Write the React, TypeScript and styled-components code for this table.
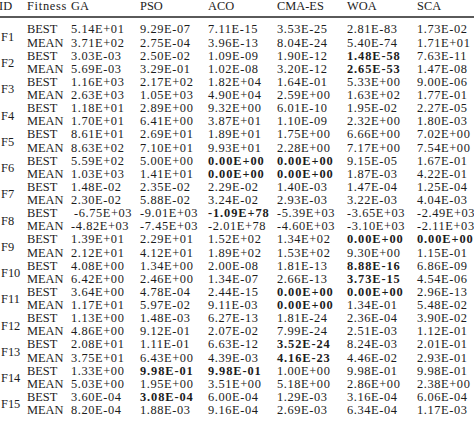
import { createGlobalStyle } from "styled-components";
import styled from "styled-components";

const GlobalStyle = createGlobalStyle`
  html, body {
    margin: 0;
    padding: 0;
    background: #fff;
  }
  body {
    font-family: "Liberation Serif", "Times New Roman", serif;
    color: #1c1c1c;
    overflow: hidden;
  }
`;

const COLS = "27px 44px 69px 68px 69px 70px 70px 1fr";
const ROW_H = 13.14;

const Page = styled.div`
  width: 474px;
  height: 422px;
  overflow: hidden;
  font-size: 12.4px;
`;

const HeaderRow = styled.div`
  display: grid;
  grid-template-columns: ${COLS};
  line-height: 11px;
  padding-top: 0.5px;
  padding-bottom: 4.5px;
  border-bottom: 2px solid #5a5a5a;
`;

const HeadCell = styled.div<{ $shift?: number; $spread?: boolean }>`
  white-space: nowrap;
  margin-left: ${(p) => p.$shift ?? 0}px;
  letter-spacing: ${(p) => (p.$spread ? "0.7px" : "0")};
`;

const Body = styled.div`
  padding-top: 5.4px;
`;

const Group = styled.div`
  display: grid;
  grid-template-columns: ${COLS};
  grid-template-rows: repeat(2, ${ROW_H}px);
  line-height: ${ROW_H}px;
`;

const FuncId = styled.div`
  grid-row: span 2;
  align-self: center;
  padding-left: 1px;
  padding-top: 2px;
  white-space: nowrap;
`;

const Label = styled.div`
  white-space: nowrap;
`;

const Value = styled.div<{ $bold?: boolean; $indent?: boolean }>`
  white-space: nowrap;
  font-weight: ${(p) => (p.$bold ? 700 : 400)};
  letter-spacing: ${(p) => (p.$bold ? "0.9px" : "0.6px")};
  padding-left: ${(p) => (p.$indent ? "3px" : "0")};
`;

const methods = ["GA", "PSO", "ACO", "CMA-ES", "WOA", "SCA"];

// each entry: [best, mean] per method; "*" marks bold, ">" a small indent
const data: string[][][] = [
  [["5.14E+01", "3.71E+02"], ["9.29E-07", "2.75E-04"], ["7.11E-15", "3.96E-13"], ["3.53E-25", "8.04E-24"], ["2.81E-83", "5.40E-74"], ["1.73E-02", "1.71E+01"]],
  [["3.03E-03", "5.69E-03"], ["2.50E-02", "3.29E-01"], ["1.09E-09", "1.02E-08"], ["1.90E-12", "3.20E-12"], ["*1.48E-58", "*2.65E-53"], ["7.63E-11", "1.47E-08"]],
  [["1.16E+03", "2.63E+03"], ["2.17E+02", "1.05E+03"], ["1.82E+04", "4.90E+04"], ["1.64E-01", "2.59E+00"], ["5.33E+00", "1.63E+02"], ["9.00E-06", "1.77E-01"]],
  [["1.18E+01", "1.70E+01"], ["2.89E+00", "6.41E+00"], ["9.32E+00", "3.87E+01"], ["6.01E-10", "1.10E-09"], ["1.95E-02", "2.32E+00"], ["2.27E-05", "1.80E-03"]],
  [["8.61E+01", "8.63E+02"], ["2.69E+01", "7.10E+01"], ["1.89E+01", "9.93E+01"], ["1.75E+00", "2.28E+00"], ["6.66E+00", "7.17E+00"], ["7.02E+00", "7.54E+00"]],
  [["5.59E+02", "1.03E+03"], ["5.00E+00", "1.41E+01"], ["*0.00E+00", "*0.00E+00"], ["*0.00E+00", "*0.00E+00"], ["9.15E-05", "1.87E-03"], ["1.67E-01", "4.22E-01"]],
  [["1.48E-02", "2.30E-02"], ["2.35E-02", "5.88E-02"], ["2.29E-02", "3.24E-02"], ["1.40E-03", "2.93E-03"], ["1.47E-04", "3.22E-03"], ["1.25E-04", "4.04E-03"]],
  [[">-6.75E+03", "-4.82E+03"], ["-9.01E+03", "-7.45E+03"], ["*-1.09E+78", "-2.01E+78"], ["-5.39E+03", "-4.60E+03"], ["-3.65E+03", "-3.10E+03"], ["-2.49E+03", "-2.11E+03"]],
  [["1.39E+01", "2.12E+01"], ["2.29E+01", "4.12E+01"], ["1.52E+02", "1.89E+02"], ["1.34E+02", "1.53E+02"], ["*0.00E+00", "9.30E+00"], ["*0.00E+00", "1.15E-01"]],
  [["4.08E+00", "6.42E+00"], ["1.34E+00", "2.46E+00"], ["2.00E-08", "1.34E-07"], ["1.81E-13", "2.66E-13"], ["*8.88E-16", "*3.73E-15"], ["6.86E-09", "4.54E-06"]],
  [["3.64E+00", "1.17E+01"], ["4.78E-04", "5.97E-02"], ["2.44E-15", "9.11E-03"], ["*0.00E+00", "*0.00E+00"], ["*0.00E+00", "1.34E-01"], ["2.96E-13", "5.48E-02"]],
  [["1.13E+00", "4.86E+00"], ["1.48E-03", "9.12E-01"], ["6.27E-13", "2.07E-02"], ["1.81E-24", "7.99E-24"], ["2.36E-04", "2.51E-03"], ["3.90E-02", "1.12E-01"]],
  [["2.08E+01", "3.75E+01"], ["1.11E-01", "6.43E+00"], ["6.63E-12", "4.39E-03"], ["*3.52E-24", "*4.16E-23"], ["8.24E-03", "4.46E-02"], ["2.01E-01", "2.93E-01"]],
  [["1.33E+00", "5.03E+00"], ["*9.98E-01", "1.95E+00"], ["*9.98E-01", "3.51E+00"], ["1.00E+00", "5.18E+00"], ["9.98E-01", "2.86E+00"], ["9.98E-01", "2.38E+00"]],
  [["3.60E-04", "8.20E-04"], ["*3.08E-04", "1.88E-03"], ["6.00E-04", "9.16E-04"], ["1.29E-03", "2.69E-03"], ["3.16E-04", "6.34E-04"], ["6.06E-04", "1.17E-03"]],
];

function Cell({ raw, row, col }: { raw: string; row: number; col: number }) {
  const indent = raw.startsWith(">");
  const bold = raw.startsWith("*");
  const text = indent || bold ? raw.slice(1) : raw;
  return (
    <Value
      $bold={bold}
      $indent={indent}
      style={{ gridRow: row + 1, gridColumn: col + 3 }}
    >
      {text}
    </Value>
  );
}

export default function App() {
  return (
    <Page>
      <GlobalStyle />
      <HeaderRow>
        <HeadCell $shift={-1}>ID</HeadCell>
        <HeadCell $spread>Fitness</HeadCell>
        {methods.map((m) => (
          <HeadCell key={m}>{m}</HeadCell>
        ))}
      </HeaderRow>
      <Body>
        {data.map((fn, i) => (
          <Group key={i}>
            <FuncId>F{i + 1}</FuncId>
            <Label style={{ gridRow: 1, gridColumn: 2 }}>BEST</Label>
            <Label style={{ gridRow: 2, gridColumn: 2 }}>MEAN</Label>
            {fn.map((pair, j) => [
              <Cell key={`b${j}`} raw={pair[0]} row={0} col={j} />,
              <Cell key={`m${j}`} raw={pair[1]} row={1} col={j} />,
            ])}
          </Group>
        ))}
      </Body>
    </Page>
  );
}
